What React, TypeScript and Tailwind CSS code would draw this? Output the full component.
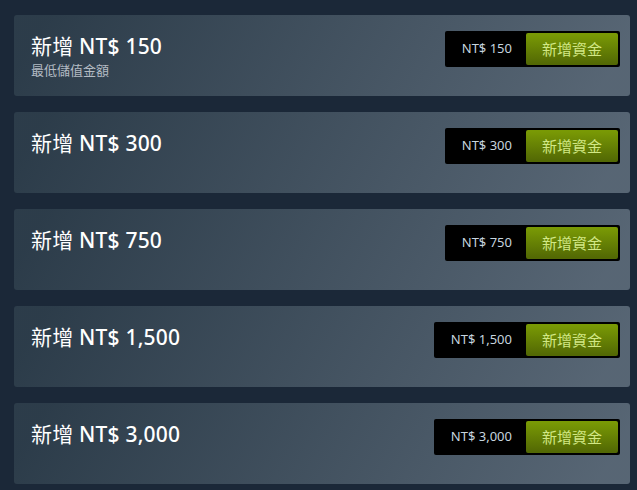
import React from "react";

const items = [
  { amount: "150", sub: "最低儲值金額" },
  { amount: "300" },
  { amount: "750" },
  { amount: "1,500" },
  { amount: "3,000" },
];

const font = { fontFamily: '"Noto Sans", "Noto Sans CJK TC", sans-serif' };

export default function App() {
  return (
    <div
      className="w-[637px] h-[490px] bg-[#1b2838] pt-[15px] pl-[14px] pr-[7px] flex flex-col gap-4 overflow-hidden"
      style={font}
    >
      {items.map((it) => (
        <div
          key={it.amount}
          className="h-[81px] shrink-0 rounded-[3px] bg-[linear-gradient(-60deg,rgba(226,244,255,0.3)_5%,rgba(84,107,115,0.3)_95%)] flex justify-between items-start pl-[17px] pr-[10px] pt-4"
        >
          <div className="flex flex-col">
            <div className="text-[21px] leading-[30px] tracking-[0.2px] text-white">
              <span>新增</span>
              <span className="font-medium"> NT$ {it.amount}</span>
            </div>
            {it.sub && <div className="text-[13px] leading-[17px] text-[#b4bcc4] mt-[1px]">{it.sub}</div>}
          </div>
          <div className="bg-black rounded-[2px] p-[2px] flex items-center">
            <div className="text-[13px] text-[#c6d4df] pl-[15px] pr-[14px]">NT$ {it.amount}</div>
            <div className="h-[32px] w-[92px] rounded-[2px] bg-[linear-gradient(to_bottom,#799905_5%,#536904_95%)] text-[#d2e885] text-[15px] flex items-center justify-center">
              新增資金
            </div>
          </div>
        </div>
      ))}
    </div>
  );
}
